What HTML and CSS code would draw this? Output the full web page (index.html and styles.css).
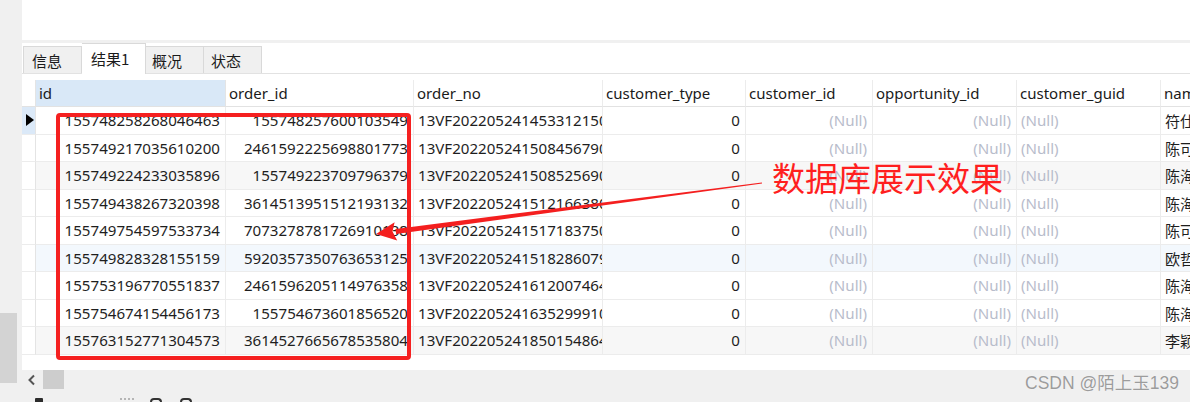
FILE: index.html
```html
<!DOCTYPE html>
<html lang="zh">
<head>
<meta charset="utf-8">
<title>结果1</title>
<link rel="stylesheet" href="styles.css">
</head>
<body>
<div class="app">
  <aside class="side"><div class="side-thumb"></div></aside>
  <main class="main">
    <div class="top"></div>
    <div class="band"></div>
    <nav class="tabs">
      <div class="tab t1">信息</div>
      <div class="tab t2 active">结果1</div>
      <div class="tab t3">概况</div>
      <div class="tab t4">状态</div>
    </nav>
    <div class="grid">
      <div class="row head">
        <div class="c ind"></div>
        <div class="c sel">id</div>
        <div class="c">order_id</div>
        <div class="c">order_no</div>
        <div class="c">customer_type</div>
        <div class="c">customer_id</div>
        <div class="c">opportunity_id</div>
        <div class="c">customer_guid</div>
        <div class="c">name</div>
      </div>
      <div class="row">
        <div class="c ind cur"><svg class="tri" width="8" height="12" viewBox="0 0 8 12"><path d="M0 0L8 6L0 12Z" fill="#000"/></svg></div>
        <div class="c r">155748258268046463</div>
        <div class="c r">155748257600103549</div>
        <div class="c">13VF202205241453312150</div>
        <div class="c r">0</div>
        <div class="c r nul">(Null)</div>
        <div class="c r nul">(Null)</div>
        <div class="c nul">(Null)</div>
        <div class="c">符仕</div>
      </div>
      <div class="row">
        <div class="c ind"></div>
        <div class="c r">155749217035610200</div>
        <div class="c r">2461592225698801773</div>
        <div class="c">13VF202205241508456790</div>
        <div class="c r">0</div>
        <div class="c r nul">(Null)</div>
        <div class="c r nul">(Null)</div>
        <div class="c nul">(Null)</div>
        <div class="c">陈可</div>
      </div>
      <div class="row alt">
        <div class="c ind"></div>
        <div class="c r">155749224233035896</div>
        <div class="c r">155749223709796379</div>
        <div class="c">13VF202205241508525690</div>
        <div class="c r">0</div>
        <div class="c r nul">(Null)</div>
        <div class="c r nul">(Null)</div>
        <div class="c nul">(Null)</div>
        <div class="c">陈海</div>
      </div>
      <div class="row">
        <div class="c ind"></div>
        <div class="c r">155749438267320398</div>
        <div class="c r">3614513951512193132</div>
        <div class="c">13VF202205241512166380</div>
        <div class="c r">0</div>
        <div class="c r nul">(Null)</div>
        <div class="c r nul">(Null)</div>
        <div class="c nul">(Null)</div>
        <div class="c">陈海</div>
      </div>
      <div class="row">
        <div class="c ind"></div>
        <div class="c r">155749754597533734</div>
        <div class="c r">7073278781726910138</div>
        <div class="c">13VF202205241517183750</div>
        <div class="c r">0</div>
        <div class="c r nul">(Null)</div>
        <div class="c r nul">(Null)</div>
        <div class="c nul">(Null)</div>
        <div class="c">陈可</div>
      </div>
      <div class="row hov">
        <div class="c ind"></div>
        <div class="c r">155749828328155159</div>
        <div class="c r">5920357350763653125</div>
        <div class="c">13VF202205241518286079</div>
        <div class="c r">0</div>
        <div class="c r nul">(Null)</div>
        <div class="c r nul">(Null)</div>
        <div class="c nul">(Null)</div>
        <div class="c">欧哲</div>
      </div>
      <div class="row">
        <div class="c ind"></div>
        <div class="c r">155753196770551837</div>
        <div class="c r">2461596205114976358</div>
        <div class="c">13VF202205241612007464</div>
        <div class="c r">0</div>
        <div class="c r nul">(Null)</div>
        <div class="c r nul">(Null)</div>
        <div class="c nul">(Null)</div>
        <div class="c">陈海</div>
      </div>
      <div class="row">
        <div class="c ind"></div>
        <div class="c r">155754674154456173</div>
        <div class="c r">155754673601856520</div>
        <div class="c">13VF202205241635299910</div>
        <div class="c r">0</div>
        <div class="c r nul">(Null)</div>
        <div class="c r nul">(Null)</div>
        <div class="c nul">(Null)</div>
        <div class="c">陈海</div>
      </div>
      <div class="row alt">
        <div class="c ind"></div>
        <div class="c r">155763152771304573</div>
        <div class="c r">3614527665678535804</div>
        <div class="c">13VF202205241850154864</div>
        <div class="c r">0</div>
        <div class="c r nul">(Null)</div>
        <div class="c r nul">(Null)</div>
        <div class="c nul">(Null)</div>
        <div class="c">李颖</div>
      </div>
    </div>
    <div class="spacer"></div>
    <div class="hscroll">
      <svg class="hs-arrow" width="9" height="12" viewBox="0 0 9 12"><path d="M7 1.5L2.5 6L7 10.5" fill="none" stroke="#555" stroke-width="2"/></svg>
      <div class="hs-thumb"></div>
    </div>
    <div class="bottom">
      <span class="bi b1"></span>
      <span class="bi b2"></span>
      <span class="bi b3"></span>
      <span class="bi b4"></span>
    </div>
  </main>
</div>

<div class="redbox"></div>
<svg class="arrow" width="1190" height="402" viewBox="0 0 1190 402">
  <polygon points="761.9,182.4 762.1,183.6 396.1,233.9 395.5,228.9" fill="#f41f1f"/>
  <polygon points="376,234 394.6,222.3 392.5,231.6 397.2,240.5" fill="#f41f1f"/>
</svg>
<div class="note">数据库展示效果</div>
<div class="wm">CSDN @陌上玉139</div>
</body>
</html>
```

FILE: styles.css
```css
* { box-sizing: border-box; }

html, body {
  margin: 0;
  width: 1190px;
  height: 402px;
  overflow: hidden;
  background: #fff;
  font-family: "Noto Sans", "Noto Sans CJK SC", sans-serif;
  font-size: 15px;
  color: #1e1e1e;
}

.app {
  display: flex;
  height: 402px;
}

.side {
  width: 22px;
  flex: none;
  background: #f0f0f0;
  padding-top: 313px;
}

.side-thumb {
  width: 17px;
  height: 70px;
  background: #d3d3d3;
}

.main {
  flex: 1;
  min-width: 0;
  overflow: hidden;
  display: flex;
  flex-direction: column;
}

.top { height: 40px; flex: none; }

.band { height: 3px; flex: none; background: #f0f0f0; }

.tabs {
  flex: none;
  height: 31px;
  display: flex;
  align-items: flex-end;
  padding-left: 1px;
  border-bottom: 1px solid #e2e2e2;
}

.tab {
  height: 27px;
  padding-left: 8px;
  background: #f0f0f0;
  border: 1px solid #d9d9d9;
  border-bottom: none;
  border-left: none;
  display: flex;
  align-items: center;
  font-size: 15px;
  color: #1a1a1a;
  font-family: "Noto Sans CJK SC", sans-serif;
}

.t1 { width: 59px; border-left: 1px solid #d9d9d9; }
.t2 { width: 64px; }
.t3 { width: 58px; padding-left: 6px; }
.t4 { width: 58px; padding-left: 7px; }

.tab.active {
  height: 31px;
  margin-bottom: -1px;
  background: #fff;
  padding-left: 9px;
  padding-bottom: 2px;
}

.grid {
  flex: none;
  margin-top: 6px;
}

.row {
  display: grid;
  grid-template-columns: 14px 190px 188px 189px 143px 127px 144px 144px 100px;
  height: 27.5px;
  font-size: 15.1px;
}

.row.head { height: 27px; font-size: 15px; }

.c {
  border-right: 1px solid #ececec;
  border-bottom: 1px solid #ececec;
  padding: 0 5px 0 4px;
  white-space: nowrap;
  overflow: hidden;
  display: flex;
  align-items: center;
}

.head .c {
  border-bottom-color: #e2e2e2;
  padding-left: 3px;
  color: #1a1a1a;
}

.head .c.sel { background: #d9e8f7; border-right-color: #e4e4e4; }

.c.ind { padding: 0; border-right-color: #e4e4e4; }
.c.cur { background: #dbe9f8; padding-left: 4px; }

.r { justify-content: flex-end; }

.nul { color: #b8bccb; }

.row.alt { background: #f7f7f7; }
.row.hov { background: #f3f8fd; }
.row .ind { background: #fff; }
.row .ind.cur { background: #dbe9f8; }

.spacer { flex: 1; }

.hscroll {
  flex: none;
  height: 19px;
  background: #f0f0f0;
  display: flex;
  align-items: center;
  padding-left: 5px;
}

.hs-arrow { margin-right: 7px; }

.hs-thumb {
  width: 21px;
  height: 19px;
  background: #cdcdcd;
}

.bottom {
  flex: none;
  height: 13px;
  background: #f0f0f0;
  display: flex;
  align-items: flex-start;
  padding-top: 9px;
  padding-left: 13px;
}

.bi { display: block; height: 4px; }
.b1 { width: 8px; background: #2c2c2c; border-radius: 1px 1px 0 0; }
.b2 { width: 14px; margin-left: 77px; border-top: 2px dotted #b5b5b5; }
.b3 { width: 12px; margin-left: 16px; border: 2px solid #333; border-bottom: none; border-radius: 5px 5px 0 0; }
.b4 { width: 12px; margin-left: 18px; border: 2px solid #333; border-bottom: none; border-radius: 6px 6px 0 0; }

.redbox {
  position: absolute;
  left: 56px;
  top: 112.5px;
  width: 355px;
  height: 247px;
  border: 4px solid #f52020;
  border-radius: 4px;
}

.arrow {
  position: absolute;
  left: 0;
  top: 0;
  pointer-events: none;
}

.note {
  position: absolute;
  left: 772px;
  top: 158px;
  font-family: "Noto Sans CJK SC", sans-serif;
  font-size: 33px;
  line-height: 39px;
  color: #ff1f1f;
  white-space: nowrap;
}

.wm {
  position: absolute;
  left: 1025px;
  top: 372px;
  font-family: "Liberation Sans", "Noto Sans CJK SC", sans-serif;
  font-size: 17.5px;
  line-height: 22px;
  color: #9c9c9c;
  white-space: nowrap;
  text-shadow: 0 0 1px #fff;
}
```
